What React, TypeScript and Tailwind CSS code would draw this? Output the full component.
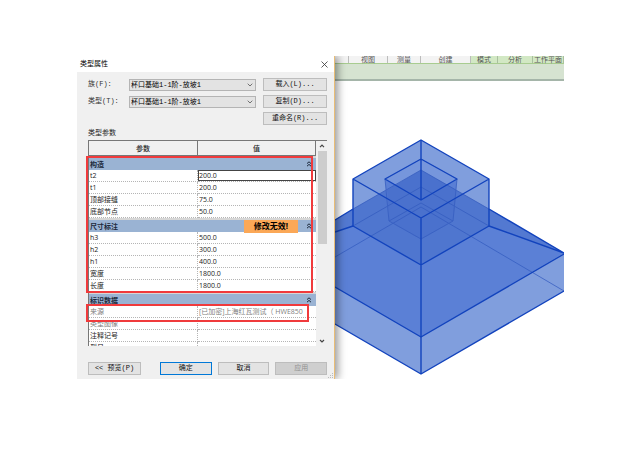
import { useState } from 'react';
import { clsx } from 'clsx';

const FORM_FONT = "font-['Liberation_Mono','Noto_Sans_CJK_SC',monospace]";
const GRID_FONT = "font-['Open_Sans','Noto_Sans_CJK_SC',sans-serif]";

type Param = { name: string; value: string; locked?: boolean };
type Group = { title: string; note?: string; params: Param[] };

const groups: Group[] = [
  {
    title: '构造',
    params: [
      { name: 't2', value: '200.0' },
      { name: 't1', value: '200.0' },
      { name: '顶部接缝', value: '75.0' },
      { name: '底部节点', value: '50.0' },
    ],
  },
  {
    title: '尺寸标注',
    note: '修改无效!',
    params: [
      { name: 'h3', value: '500.0' },
      { name: 'h2', value: '300.0' },
      { name: 'h1', value: '400.0' },
      { name: '宽度', value: '1800.0' },
      { name: '长度', value: '1800.0' },
    ],
  },
  {
    title: '标识数据',
    params: [
      { name: '来源', value: '[已加密]上海红瓦测试（ HWE850', locked: true },
      { name: '类型图像', value: '', locked: true },
      { name: '注释记号', value: '' },
      { name: '型号', value: '' },
    ],
  },
];

const ribbonTabs = [
  { label: '', green: false },
  { label: '视图', green: false },
  { label: '测量', green: false },
  { label: '创建', green: false },
  { label: '模式', green: true },
  { label: '分析', green: true },
  { label: '工作平面', green: true },
];

function Combo({ id, label }: { id: string; label: string }) {
  return (
    <>
      <label htmlFor={id} className="whitespace-nowrap text-[#333]">{label}</label>
      <div className="relative mr-[7px]">
        <select
          id={id}
          className="block h-3 w-full appearance-none border border-[#b4b4b4] bg-[#e3e3e3] pl-px leading-[10px] text-black"
        >
          <option>杯口基础1-1阶-放坡1</option>
        </select>
        <svg viewBox="0 0 6 4" className="pointer-events-none absolute right-[3px] top-1 h-1 w-1.5" fill="none" stroke="#555" strokeWidth="0.8">
          <path d="M0.7 0.7 3 3 5.3 0.7" />
        </svg>
      </div>
    </>
  );
}

function DialogButton({ children, primary, disabled }: { children: string; primary?: boolean; disabled?: boolean }) {
  return (
    <button
      type="button"
      disabled={disabled}
      className={clsx(
        'h-[13px] whitespace-nowrap border text-center leading-[11px]',
        primary ? 'border-[#0078d7]' : 'border-[#bdbdbd]',
        disabled ? 'bg-[#cfcfcf] text-[#929292]' : 'bg-[#e3e3e3] text-[#111]'
      )}
    >
      {children}
    </button>
  );
}

function GroupRows({ group }: { group: Group }) {
  const [open, setOpen] = useState(true);

  return (
    <tbody>
      <tr>
        <th colSpan={2} scope="colgroup" className="h-[14px] border-t-2 border-[#d6d6d6] bg-[#9ab3d3] p-0 text-left">
          <div className="flex h-3 items-center pl-px pr-1">
            <span className="font-bold text-[#1c2a3c]">{group.title}</span>
            {group.note && (
              <span className="ml-auto mr-2 h-[13px] w-[54px] bg-[#fba857] text-center text-[8px] font-bold leading-[12px] text-black">
                {group.note}
              </span>
            )}
            <button
              type="button"
              aria-label={group.title}
              aria-expanded={open}
              onClick={() => setOpen(!open)}
              className={clsx('flex h-3 w-1.5 items-center', !group.note && 'ml-auto')}
            >
              <svg viewBox="0 0 6 6" className="size-1.5" fill="none" stroke="#1b2738" strokeWidth="1">
                <path d="M1 2.6 3 0.8 5 2.6M1 5.2 3 3.4 5 5.2" />
              </svg>
            </button>
          </div>
        </th>
      </tr>
      {open &&
        group.params.map((p) => (
          <tr key={p.name} className={p.locked ? 'text-[#808080]' : 'text-[#222]'}>
            <td className="h-3 border-b border-r border-dotted border-[#b5b5b5] p-0 pl-px">
              <div className="h-[11px]">{p.name}</div>
            </td>
            <td className="h-3 border-b border-dotted border-[#b5b5b5] p-0">
              <input
                aria-label={p.name}
                defaultValue={p.value}
                readOnly={p.locked}
                className={clsx('block h-[11px] w-full pl-px outline-none', p.name === 't2' && 'ring-1 ring-inset ring-[#444]')}
              />
            </td>
          </tr>
        ))}
    </tbody>
  );
}

function ParameterGrid() {
  return (
    <div className="relative">
      <div className="flex h-[206px] overflow-hidden border-l border-t border-[#777] bg-white">
        <div className="min-w-0 grow">
          <table className={clsx('w-full table-fixed border-separate border-spacing-0 text-[7px] leading-[11px]', GRID_FONT)}>
            <thead>
              <tr className="bg-[#f0f0f0] text-[#222]">
                <th scope="col" className="h-[15px] w-[48%] border-b border-r border-[#777] p-0 font-medium">参数</th>
                <th scope="col" className="h-[15px] border-b border-r border-[#777] p-0 font-medium">值</th>
              </tr>
            </thead>
            {groups.map((g) => (
              <GroupRows key={g.title} group={g} />
            ))}
          </table>
        </div>
        {/* scroll bar */}
        <div className="flex w-[13px] flex-col items-center justify-between bg-[#f0f0f0] pl-px">
          <svg viewBox="0 0 10 10" className="size-2.5" fill="none" stroke="#444" strokeWidth="1.2">
            <path d="M3 6.2 5 4.2 7 6.2" />
          </svg>
          <div className="mb-auto h-[93px] w-[9px] bg-[#cdcdcd]"></div>
          <svg viewBox="0 0 10 10" className="size-2.5" fill="none" stroke="#444" strokeWidth="1.2">
            <path d="M3 4 5 6 7 4" />
          </svg>
        </div>
      </div>
      {/* callouts over the grid */}
      <div className="pointer-events-none absolute -left-0.5 right-3.5 top-4 h-[137px] border-2 border-[#f03a3c]"></div>
      <div className="pointer-events-none absolute -left-0.5 right-[18px] top-[164px] h-[18px] border-2 border-[#f03a3c]"></div>
    </div>
  );
}

function TypeDialog() {
  return (
    <section className={clsx('relative z-10 w-[258px] shrink-0 border-r border-[#e9bd76] bg-[#f0f0f0] text-[7px] shadow-[3px_0_8px_rgba(0,0,0,0.4)] [clip-path:inset(0_-14px_0_0)]', FORM_FONT)}>
      <header className="flex h-4 items-center justify-between bg-white pl-[3px] pr-1.5">
        <h1 className="text-[7px] leading-3 text-black">类型属性</h1>
        <button type="button" aria-label="关闭">
          <svg viewBox="0 0 7 7" className="size-[7px]" stroke="#333" strokeWidth="0.8">
            <path d="M0.5 0.5 6.5 6.5M6.5 0.5 0.5 6.5" />
          </svg>
        </button>
      </header>

      <div className="pb-1 pl-[11px] pr-[7px] pt-1.5">
        <div className="grid grid-cols-[41px_1fr_64px] items-center gap-y-1">
          <Combo id="family" label="族(F):" />
          <DialogButton>载入(L)...</DialogButton>
          <Combo id="type" label="类型(T):" />
          <DialogButton>复制(D)...</DialogButton>
          <div className="col-start-3 grid">
            <DialogButton>重命名(R)...</DialogButton>
          </div>
        </div>

        <h2 className="mb-px mt-0.5 leading-3 text-[#222]">类型参数</h2>
        <ParameterGrid />

        <footer className="mt-4 flex">
          <div className="mr-[19px] grid w-[53px]">
            <DialogButton>{'<< 预览(P)'}</DialogButton>
          </div>
          <div className="grid grow grid-cols-3 gap-x-1.5">
            <DialogButton primary>确定</DialogButton>
            <DialogButton>取消</DialogButton>
            <DialogButton disabled>应用</DialogButton>
          </div>
        </footer>
      </div>

      <svg viewBox="0 0 6 6" className="absolute bottom-0 right-0 size-1.5" fill="#bbb">
        <path d="M4 0h1v1H4zM2 2h1v1H2zM4 2h1v1H4zM0 4h1v1H0zM2 4h1v1H2zM4 4h1v1H4z" />
      </svg>
    </section>
  );
}

function FoundationModel() {
  return (
    <svg viewBox="335 81 229 298" className="block w-full" role="img" aria-label="杯口基础">
      {/* base slab */}
      <path d="M335 220 421 170 564 253V291L421 374 335 324Z" fill="#809edd" />
      <path d="M335 220 421 170 564 253 421 337 335 287Z" fill="#5b80d6" />
      {/* upper step */}
      <path d="M353 179 421 140 489 179V226L421 265 353 226Z" fill="#809edd" />
      <path d="M353 209 421 170 489 209V226L421 265 353 226Z" fill="#4f76cf" />
      <path d="M335 220 353 209V226L335 232ZM489 209 564 253 489 226Z" fill="#5379d1" />
      {/* cup opening */}
      <path d="M385 179 421 159 457 179 453 221 421 239 389 221Z" fill="#5a7fd5" />
      <path d="M385 179 421 159 457 179 421 200Z" fill="#7696dc" />
      <path d="M387 190 421 170 456 190 453 221 421 239 389 221Z" fill="#4a71cd" />
      {/* hidden edges */}
      <g fill="none" stroke="#345cc0" strokeWidth="1" opacity="0.75">
        <path d="M353 209 421 170 489 209" />
        <path d="M353 226 421 187 489 226" />
        <path d="M335 257 421 207 564 291" />
        <path d="M385 179 389 221 421 239 453 221 457 179M389 221 421 203 453 221" />
      </g>
      {/* visible edges */}
      <g fill="none" stroke="#1243bd" strokeWidth="1.4" strokeLinejoin="round">
        <path d="M353 179 421 140 489 179 421 218ZM353 179V226L421 265 489 226V179M421 218V374" />
        <path d="M385 179 421 159 457 179 421 200ZM421 140V200" />
        <path d="M335 220 353 209M489 209 564 253 489 226M353 226 335 232" />
        <path d="M335 287 421 337 564 254M335 324 421 374 564 291" />
      </g>
    </svg>
  );
}

function Viewport() {
  return (
    <section className={clsx('min-w-0 grow overflow-hidden bg-white', GRID_FONT)}>
      <nav className="grid h-[7px] grid-cols-[14fr_39fr_33fr_50fr_27fr_35fr_31fr] text-[7px] leading-[7px] text-[#555]">
        {ribbonTabs.map((tab, i) => (
          <div
            key={i}
            className={clsx(
              'whitespace-nowrap border-r text-center',
              tab.green ? 'border-[#a9bf9f] bg-[#d2e8c4]' : 'border-[#bcbcbc] bg-[#f3f3f3]'
            )}
          >
            {tab.label}
          </div>
        ))}
      </nav>
      <div className="h-[18px] border-b-2 border-t border-b-[#a5b5a9] border-t-[#a8cc90] bg-[#d6e3d1]"></div>
      <FoundationModel />
    </section>
  );
}

export default function App() {
  return (
    <main className="min-h-screen bg-white pl-[77px] pr-[72px] pt-14">
      <div className="flex items-stretch">
        <TypeDialog />
        <Viewport />
      </div>
    </main>
  );
}
